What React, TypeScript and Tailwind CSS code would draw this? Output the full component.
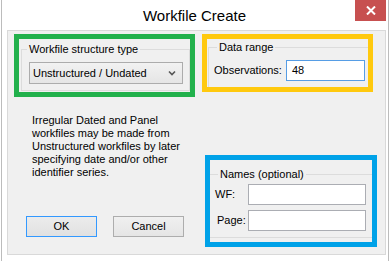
import React from "react";

const font = { fontFamily: '"Liberation Sans", Arial, sans-serif' };

function Chevron() {
  return (
    <svg width="8" height="6" viewBox="0 0 8 6" className="block">
      <path d="M1 1.5 L4 4.5 L7 1.5" fill="none" stroke="#555" strokeWidth="1.6" />
    </svg>
  );
}

function CloseGlyph() {
  return (
    <svg width="10" height="9" viewBox="0 0 10 9" className="block">
      <path d="M1 0.5 L9 8.5 M9 0.5 L1 8.5" stroke="#fff" strokeWidth="2" />
    </svg>
  );
}

export default function App() {
  return (
    <div className="w-[390px] h-[261px] bg-white overflow-hidden" style={font}>
      <div className="ml-[1px] w-[388px] h-[261px] border-l border-r border-[#bcbcbc] relative">
        {/* title bar */}
        <div className="h-[30px] flex items-center justify-center">
          <span className="text-[15px] text-black leading-none -ml-[1px]">Workfile Create</span>
        </div>
        <div className="absolute top-0 right-[2px] w-[31px] h-[21px] bg-[#c75050] flex items-center justify-center">
          <CloseGlyph />
        </div>

        {/* client area */}
        <div className="ml-[5px] w-[379px] h-[225px] border border-[#d9d9d9] bg-[#f0f0f0] flex text-[11px] text-black">
          {/* left column */}
          <div className="ml-[6px] mt-[3px] w-[181px] flex flex-col">
            <div className="h-[63px] border-[5px] border-[#22b14c]">
              <fieldset className="ml-[2px] mt-[3px] w-[169px] border border-[#dcdcdc] pb-[6px]">
                <legend className="ml-[5px] px-[2px] leading-[14px]">Workfile structure type</legend>
                <div className="ml-[7px] mt-[6px] w-[154px] h-[22px] border border-[#acacac] bg-gradient-to-b from-[#f2f2f2] to-[#e5e5e5] flex items-center justify-between pl-[3px] pr-[6px]">
                  <span className="leading-none">Unstructured / Undated</span>
                  <Chevron />
                </div>
              </fieldset>
            </div>
            <p className="ml-[18px] mt-[17px] leading-[13px]">
              Irregular Dated and Panel
              <br />
              workfiles may be made from
              <br />
              Unstructured workfiles by later
              <br />
              specifying date and/or other
              <br />
              identifier series.
            </p>
            <div className="ml-[12px] mt-[37px] flex gap-[16px]">
              <button className="w-[71px] h-[21px] border border-[#3399ff] bg-gradient-to-b from-[#ececec] to-[#e1e1e1] leading-none">
                OK
              </button>
              <button className="w-[71px] h-[21px] border border-[#adadad] bg-gradient-to-b from-[#f0f0f0] to-[#e5e5e5] leading-none">
                Cancel
              </button>
            </div>
          </div>

          {/* right column */}
          <div className="ml-[7px] mt-[3px] flex flex-col">
            <div className="w-[171px] h-[58px] border-[5px] border-[#ffc90e] overflow-hidden">
              <fieldset className="ml-[1px] mt-[1px] border-t border-l border-[#dcdcdc] pl-[5px] pb-[10px]">
                <legend className="ml-[3px] px-[2px] leading-[14px]">Data range</legend>
                <div className="mt-[6px] flex items-center">
                  <span className="w-[72px]">Observations:</span>
                  <div className="w-[79px] h-[21px] border border-[#569de5] bg-white flex items-center pl-[5px] leading-none">
                    48
                  </div>
                </div>
              </fieldset>
            </div>
            <div className="ml-[3px] mt-[63px] w-[172px] h-[92px] border-[5px] border-[#00a2e8] overflow-hidden">
              <fieldset className="mt-[7px] border-t border-b border-[#dcdcdc] pl-[5px] pb-[6px]">
                <legend className="ml-[3px] px-[2px] leading-[14px]">Names (optional)</legend>
                <div className="mt-[3px] flex items-center">
                  <span className="w-[33px]">WF:</span>
                  <div className="w-[118px] h-[21px] border border-[#abadb3] bg-white" />
                </div>
                <div className="mt-[5px] flex items-center">
                  <span className="w-[33px] pl-[2px]">Page:</span>
                  <div className="w-[118px] h-[21px] border border-[#abadb3] bg-white" />
                </div>
              </fieldset>
            </div>
          </div>
        </div>
      </div>
    </div>
  );
}
